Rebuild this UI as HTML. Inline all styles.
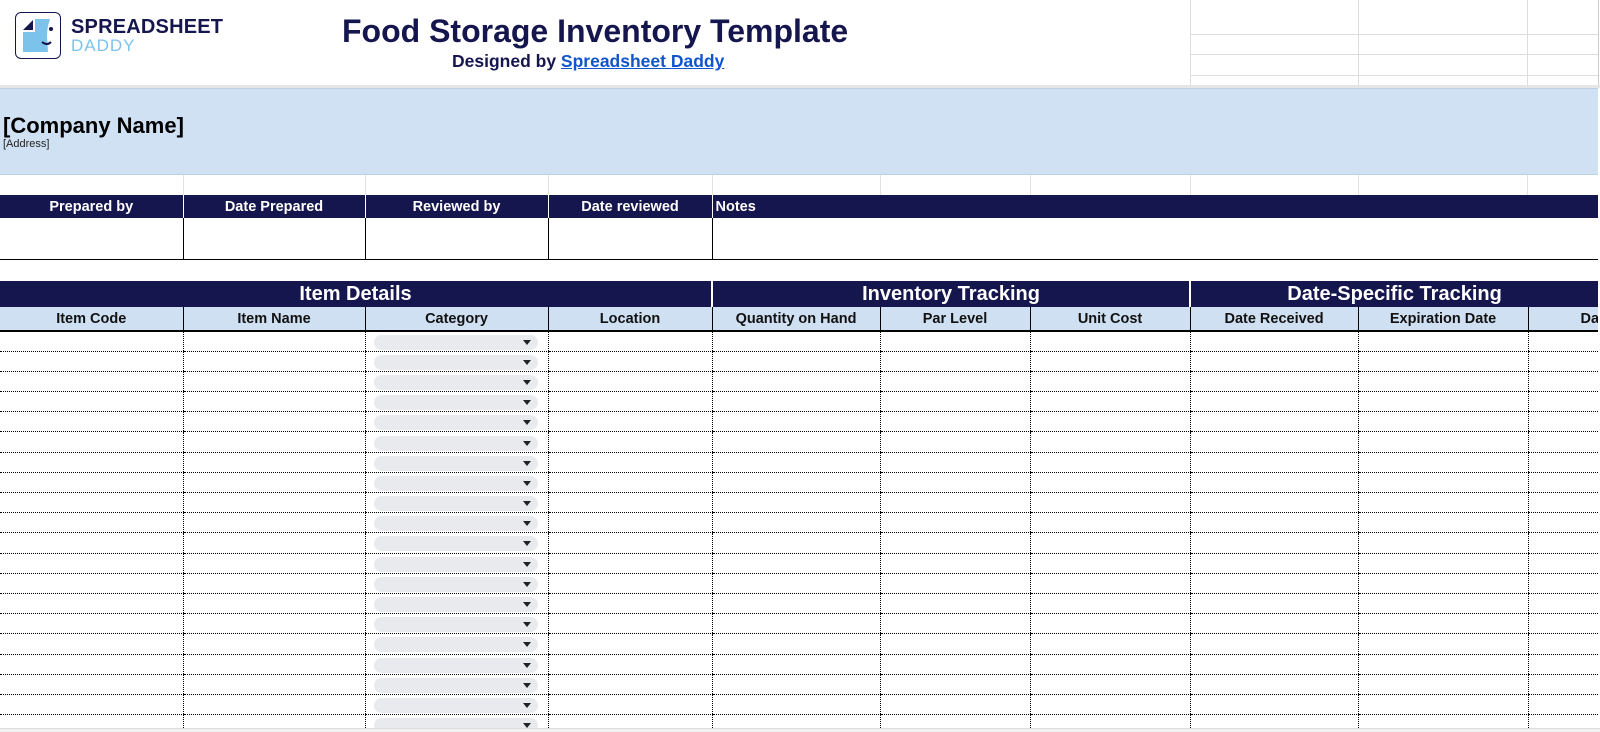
<!DOCTYPE html>
<html style="overflow:hidden;height:732px"><head><meta charset="utf-8"><style>
*{margin:0;padding:0;box-sizing:border-box}
body{width:1600px;height:732px;overflow:hidden;background:#fff;font-family:"Liberation Sans",sans-serif;position:relative}
#wrap{position:absolute;left:0;top:0;width:1600px;height:732px;overflow:hidden}
.abs{position:absolute}
.navy{color:#16164f}
table{border-collapse:collapse;table-layout:fixed;position:absolute;left:0}
td{padding:0;overflow:hidden;white-space:nowrap}
.dh td{background:#16164f;color:#fff;font-weight:bold;font-size:14.5px;text-align:center;height:23px;border-left:1px solid #fff}
.gh td{background:#16164f;color:#fff;font-weight:bold;font-size:20px;text-align:center;height:26px;border-left:2px solid #fff}
.ch td{background:#cfe0f2;font-weight:bold;font-size:14.5px;text-align:center;height:24px;border-left:1px solid #000;border-bottom:2px solid #000;color:#111}
.dr td{height:20.2px;border-bottom:1px dotted #000;border-left:1px dotted #000}
.chip{display:block;margin:2px 10px 0 8px;height:15px;border-radius:8px;background:#e8eaed;position:relative}
.chip:after{content:"";position:absolute;right:7px;top:5px;border-left:4px solid transparent;border-right:4px solid transparent;border-top:5px solid #222}
</style></head><body><div id="wrap">
<div class="abs" style="left:15px;top:12px;width:46px;height:47px;border:1.5px solid #16164f;border-radius:6px"></div>
<svg class="abs" style="left:20px;top:16px" width="38" height="40" viewBox="0 0 38 40">
<path d="M3 14 L13 4 L13 14 Z" fill="#16164f"/>
<path d="M15 3 L30 3 Q27 12 27 20 L28 36 L3 36 L3 16 L15 16 Z" fill="#7cc3ec"/>
<circle cx="31" cy="13" r="2" fill="#16164f"/>
<path d="M22 26 Q27 30 31 26" stroke="#16164f" stroke-width="2" fill="none"/>
</svg>
<div class="abs navy" style="left:71px;top:16px;font-size:20px;font-weight:bold;letter-spacing:0.2px">SPREADSHEET</div>
<div class="abs" style="left:71px;top:36px;font-size:17px;color:#7cc3ec;letter-spacing:1px">DADDY</div>
<div class="abs navy" style="left:342px;top:13px;font-size:32px;font-weight:bold">Food Storage Inventory Template</div>
<div class="abs navy" style="left:452px;top:51px;font-size:17.5px;font-weight:bold">Designed by <span style="color:#1155cc;text-decoration:underline">Spreadsheet Daddy</span></div>
<div class="abs" style="left:1190px;top:0;width:1px;height:88px;background:#ddd"></div>
<div class="abs" style="left:1358px;top:0;width:1px;height:88px;background:#ddd"></div>
<div class="abs" style="left:1527px;top:0;width:1px;height:88px;background:#ddd"></div>
<div class="abs" style="left:1598px;top:0;width:1px;height:88px;background:#ccc"></div>
<div class="abs" style="left:1190px;top:34px;width:408px;height:1px;background:#ddd"></div>
<div class="abs" style="left:1190px;top:54px;width:408px;height:1px;background:#ddd"></div>
<div class="abs" style="left:1190px;top:75px;width:408px;height:1px;background:#ddd"></div>
<div class="abs" style="left:0;top:85px;width:1600px;height:3px;background:#e6e6e6"></div>
<div class="abs" style="left:0;top:88px;width:1598px;height:87px;background:#d0e1f3;border-top:1px solid #bcd0e6;border-bottom:1px solid #bcd0e6"></div>
<div class="abs" style="left:3px;top:113px;font-size:22px;font-weight:bold;color:#000">[Company Name]</div>
<div class="abs" style="left:3px;top:138px;font-size:11px;color:#222">[Address]</div>
<div class="abs" style="left:0;top:175px;width:1598px;height:20px">
<div class="abs" style="left:183px;top:0;width:1px;height:20px;background:#e2e2e2"></div>
<div class="abs" style="left:365px;top:0;width:1px;height:20px;background:#e2e2e2"></div>
<div class="abs" style="left:548px;top:0;width:1px;height:20px;background:#e2e2e2"></div>
<div class="abs" style="left:712px;top:0;width:1px;height:20px;background:#e2e2e2"></div>
<div class="abs" style="left:880px;top:0;width:1px;height:20px;background:#e2e2e2"></div>
<div class="abs" style="left:1030px;top:0;width:1px;height:20px;background:#e2e2e2"></div>
<div class="abs" style="left:1190px;top:0;width:1px;height:20px;background:#e2e2e2"></div>
<div class="abs" style="left:1358px;top:0;width:1px;height:20px;background:#e2e2e2"></div>
<div class="abs" style="left:1527px;top:0;width:1px;height:20px;background:#e2e2e2"></div>
</div>
<table style="top:195px;width:1598px">
<colgroup><col style="width:183px"><col style="width:182px"><col style="width:183px"><col style="width:164px"><col style="width:886px"></colgroup>
<tr class="dh"><td style="border-left:none">Prepared by</td><td>Date Prepared</td><td>Reviewed by</td><td>Date reviewed</td><td style="text-align:left;padding-left:3px">Notes</td></tr>
<tr><td style="height:41px;border-bottom:1.5px solid #000"></td><td style="border-left:1px solid #000;border-bottom:1.5px solid #000"></td><td style="border-left:1px solid #000;border-bottom:1.5px solid #000"></td><td style="border-left:1px solid #000;border-bottom:1.5px solid #000"></td><td style="border-left:1px solid #000;border-bottom:1.5px solid #000"></td></tr>
</table>
<table id="m" style="top:281px;width:1598px">
<colgroup><col style="width:183px"><col style="width:182px"><col style="width:183px"><col style="width:164px"><col style="width:168px"><col style="width:150px"><col style="width:160px"><col style="width:168px"><col style="width:170px"><col style="width:70px"></colgroup>
<tr class="gh"><td colspan="4" style="border-left:none">Item Details</td><td colspan="3">Inventory Tracking</td><td colspan="3">Date-Specific Tracking</td></tr>
<tr class="ch"><td style="border-left:none">Item Code</td><td>Item Name</td><td>Category</td><td>Location</td><td>Quantity on Hand</td><td>Par Level</td><td>Unit Cost</td><td>Date Received</td><td>Expiration Date</td><td style="text-align:left;padding-left:52px">Days</td></tr>
</table>
<script>
var t=document.getElementById('m');
for(var i=0;i<20;i++){var r=t.insertRow();r.className='dr';
for(var j=0;j<10;j++){var c=r.insertCell();if(j==0)c.style.borderLeft='none';if(j==2)c.innerHTML='<span class="chip"></span>';}}
</script>
<div class="abs" style="left:0;top:728px;width:1600px;height:4px;background:#f1f1f1;border-top:1px solid #ddd"></div>
</div></body></html>
